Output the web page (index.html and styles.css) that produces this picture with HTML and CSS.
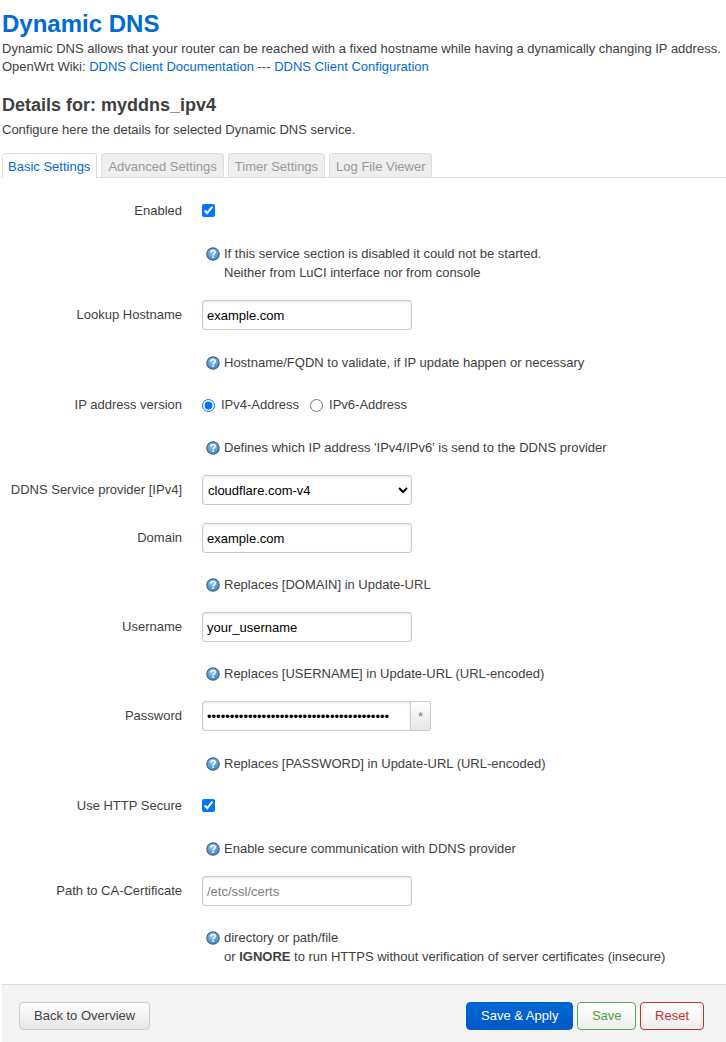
FILE: index.html
```html
<!DOCTYPE html>
<html lang="en">
<head>
    <meta charset="UTF-8">
    <meta name="viewport" content="width=device-width, initial-scale=1.0">
    <title>Dynamic DNS</title>
    <link rel="stylesheet" href="styles.css">
</head>
<body>
    <svg class="icon-defs" width="0" height="0">
        <defs>
            <radialGradient id="helpFill" cx="45%" cy="35%" r="70%">
                <stop offset="0" stop-color="#9cc9f0"/>
                <stop offset="1" stop-color="#327fc6"/>
            </radialGradient>
            <symbol id="help" viewBox="0 0 14 14">
                <circle cx="7" cy="7" r="6.2" fill="url(#helpFill)" stroke="#44688a" stroke-width="1.2"/>
                <path d="M4.9 5.6c0-1.3 1-2 2.2-2s2.1.7 2.1 1.8c0 1.5-2.1 1.6-2.1 3" fill="none" stroke="#fff" stroke-width="1.5"/>
                <rect x="6.3" y="9.4" width="1.6" height="1.6" fill="#fff"/>
            </symbol>
        </defs>
    </svg>

    <h1>Dynamic DNS</h1>
    <p class="intro">Dynamic DNS allows that your router can be reached with a fixed hostname while having a dynamically changing IP address.<br>
    OpenWrt Wiki: <a href="#">DDNS Client Documentation</a> --- <a href="#">DDNS Client Configuration</a></p>

    <h2>Details for: myddns_ipv4</h2>
    <p class="subtitle">Configure here the details for selected Dynamic DNS service.</p>

    <ul class="tabs">
        <li class="active"><a href="#">Basic Settings</a></li>
        <li><a href="#">Advanced Settings</a></li>
        <li><a href="#">Timer Settings</a></li>
        <li><a href="#">Log File Viewer</a></li>
    </ul>

    <form class="settings">
        <div class="row first check">
            <label class="title">Enabled</label>
            <div class="field">
                <div class="control"><input type="checkbox" checked></div>
                <div class="help gap-19">
                    <svg class="help-icon"><use href="#help"/></svg>
                    <span>If this service section is disabled it could not be started.<br>Neither from LuCI interface nor from console</span>
                </div>
            </div>
        </div>

        <div class="row">
            <label class="title">Lookup Hostname</label>
            <div class="field">
                <div class="control"><input class="text" type="text" value="example.com"></div>
                <div class="help gap-23">
                    <svg class="help-icon"><use href="#help"/></svg>
                    <span>Hostname/FQDN to validate, if IP update happen or necessary</span>
                </div>
            </div>
        </div>

        <div class="row">
            <label class="title">IP address version</label>
            <div class="field">
                <div class="control radios">
                    <label><input type="radio" name="ipver" checked> IPv4-Address</label>
                    <label><input type="radio" name="ipver"> IPv6-Address</label>
                </div>
                <div class="help gap-18">
                    <svg class="help-icon"><use href="#help"/></svg>
                    <span>Defines which IP address 'IPv4/IPv6' is send to the DDNS provider</span>
                </div>
            </div>
        </div>

        <div class="row">
            <label class="title">DDNS Service provider [IPv4]</label>
            <div class="field">
                <div class="control">
                    <select class="text">
                        <option>cloudflare.com-v4</option>
                    </select>
                </div>
            </div>
        </div>

        <div class="row">
            <label class="title">Domain</label>
            <div class="field">
                <div class="control"><input class="text" type="text" value="example.com"></div>
                <div class="help">
                    <svg class="help-icon"><use href="#help"/></svg>
                    <span>Replaces [DOMAIN] in Update-URL</span>
                </div>
            </div>
        </div>

        <div class="row">
            <label class="title">Username</label>
            <div class="field">
                <div class="control"><input class="text" type="text" value="your_username"></div>
                <div class="help">
                    <svg class="help-icon"><use href="#help"/></svg>
                    <span>Replaces [USERNAME] in Update-URL (URL-encoded)</span>
                </div>
            </div>
        </div>

        <div class="row short">
            <label class="title">Password</label>
            <div class="field">
                <div class="control password">
                    <input class="text" type="password" value="abcdefghijklmnopqrstuvwxyz01234567890123">
                    <button type="button" class="reveal">*</button>
                </div>
                <div class="help gap-23">
                    <svg class="help-icon"><use href="#help"/></svg>
                    <span>Replaces [PASSWORD] in Update-URL (URL-encoded)</span>
                </div>
            </div>
        </div>

        <div class="row check">
            <label class="title">Use HTTP Secure</label>
            <div class="field">
                <div class="control"><input type="checkbox" checked></div>
                <div class="help gap-19">
                    <svg class="help-icon"><use href="#help"/></svg>
                    <span>Enable secure communication with DDNS provider</span>
                </div>
            </div>
        </div>

        <div class="row">
            <label class="title">Path to CA-Certificate</label>
            <div class="field">
                <div class="control"><input class="text" type="text" placeholder="/etc/ssl/certs"></div>
                <div class="help">
                    <svg class="help-icon"><use href="#help"/></svg>
                    <span>directory or path/file<br>or <strong>IGNORE</strong> to run HTTPS without verification of server certificates (insecure)</span>
                </div>
            </div>
        </div>
    </form>

    <div class="actions">
        <button type="button" class="btn">Back to Overview</button>
        <div class="actions-right">
            <button type="button" class="btn primary">Save &amp; Apply</button>
            <button type="button" class="btn positive">Save</button>
            <button type="button" class="btn negative">Reset</button>
        </div>
    </div>
</body>
</html>
```

FILE: styles.css
```css
body {
    font-family: "Liberation Sans", Arial, sans-serif;
    font-size: 13px;
    line-height: 18px;
    color: #404040;
    background: #fff;
    margin: 0;
    padding: 0 0 0 2px;
    height: 1042px;
    overflow: hidden;
}

.icon-defs {
    position: absolute;
}

a {
    color: #0069d6;
    text-decoration: none;
}

h1 {
    font-size: 24px;
    line-height: 30px;
    color: #0069d6;
    margin: 9px 0 1px;
}

.intro {
    margin: 0 0 17px;
}

h2 {
    font-size: 18px;
    line-height: 24px;
    margin: 0 0 4px;
}

.subtitle {
    margin: 0 0 14px;
}

.tabs {
    list-style: none;
    display: flex;
    gap: 4px;
    margin: 0;
    padding: 0;
    height: 24px;
    border-bottom: 1px solid #ddd;
}

.tabs li {
    height: 23px;
    line-height: 25px;
    padding: 0 6px;
    background: #eee;
    border: 1px solid #ddd;
    border-bottom: 0;
    border-radius: 4px 4px 0 0;
}

.tabs li a {
    color: #999;
}

.tabs li.active {
    height: 24px;
    padding-left: 5px;
    background: #fff;
}

.tabs li.active a {
    color: #0069d6;
}

.row {
    display: flex;
    margin-bottom: 18px;
}

.row.short {
    margin-bottom: 17px;
}

.row.first {
    padding-top: 17px;
}

.title {
    width: 180px;
    flex: none;
    text-align: right;
    line-height: 30px;
}

.row.check .title {
    line-height: 32px;
}

.field {
    margin-left: 20px;
}

.control {
    display: flex;
    align-items: center;
    height: 30px;
}

.control input[type="checkbox"],
.control input[type="radio"] {
    margin: 0;
}

.text {
    box-sizing: border-box;
    width: 210px;
    height: 30px;
    padding: 0 4px;
    font-family: inherit;
    font-size: 13px;
    color: #000;
    background: #fff;
    border: 1px solid #ccc;
    border-radius: 3px;
    box-shadow: inset 0 1px 3px rgba(0, 0, 0, 0.1);
}

select.text {
    padding: 0 0 0 1px;
}

.text::placeholder {
    color: #808080;
}

.radios {
    gap: 11px;
}

.radios label {
    display: flex;
    align-items: center;
    gap: 6px;
}

.password .text {
    width: 209px;
    border-radius: 3px 0 0 3px;
}

.reveal {
    width: 20px;
    height: 30px;
    padding: 0;
    color: #808080;
    font-size: 13px;
    background: linear-gradient(#fff, #e6e6e6);
    border: 1px solid #ccc;
    border-left: 0;
    border-radius: 0 3px 3px 0;
}

.help {
    display: flex;
    align-items: flex-start;
    gap: 4px;
    line-height: 19px;
    margin: 22px 0 0 4px;
}

.help.gap-18 {
    margin-top: 18px;
}

.help.gap-19 {
    margin-top: 19px;
}

.help.gap-23 {
    margin-top: 23px;
}

.help-icon {
    width: 14px;
    height: 14px;
    margin-top: 3px;
    flex: none;
}

.actions {
    display: flex;
    justify-content: space-between;
    align-items: flex-start;
    height: 40px;
    padding: 17px 22px 0 17px;
    background: #f4f4f4;
    border-top: 1px solid #ddd;
}

.actions-right {
    display: flex;
    gap: 4px;
}

.btn {
    height: 28px;
    padding: 0 14px 2px;
    font-family: inherit;
    font-size: 13px;
    color: #404040;
    background: linear-gradient(#fff, #e6e6e6);
    border: 1px solid #ccc;
    border-radius: 4px;
}

.btn.primary {
    color: #fff;
    background: linear-gradient(#0069d6, #0056c8);
    border-color: #0062cc;
}

.btn.positive {
    padding: 0 13.5px 2px;
    color: #4a9f45;
    background: linear-gradient(#fff, #eee);
    border-color: #4cae4c;
}

.btn.negative {
    color: #c9302c;
    background: linear-gradient(#fff, #eee);
    border-color: #c9302c;
}
```
